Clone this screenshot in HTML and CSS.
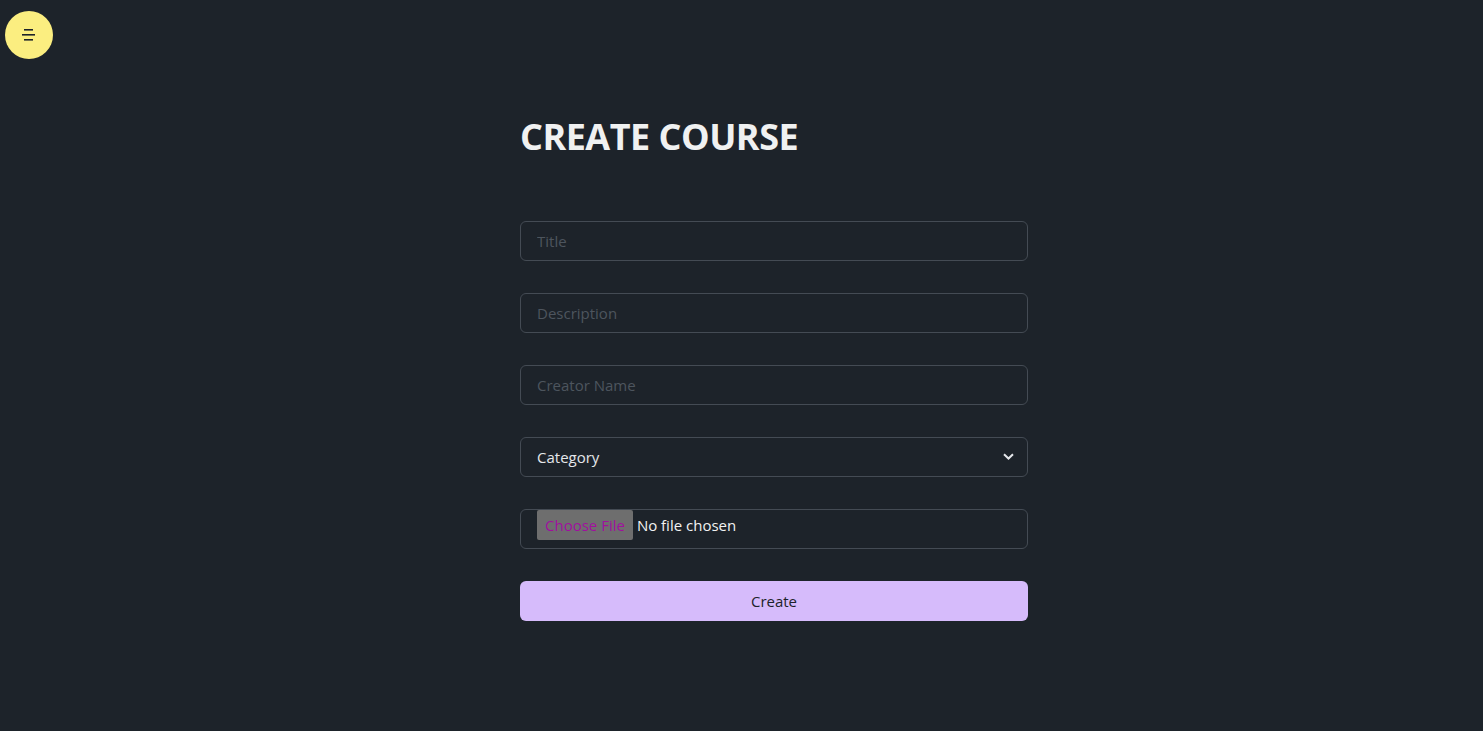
FILE: index.html
```html
<!DOCTYPE html>
<html lang="en">
<head>
<meta charset="utf-8">
<title>Create Course</title>
<link rel="stylesheet" href="styles.css">
</head>
<body>
<button class="menu-btn" type="button" aria-label="Menu">
  <svg width="14" height="12" viewBox="0 0 14 12" aria-hidden="true">
    <rect x="2" y="0" width="9" height="1.6" fill="#1d232a"/>
    <rect x="0" y="5" width="13" height="1.6" fill="#1d232a"/>
    <rect x="2" y="10" width="9" height="1.6" fill="#1d232a"/>
  </svg>
</button>
<main class="page">
  <h1 class="title">CREATE COURSE</h1>
  <form class="form">
    <input class="field" type="text" placeholder="Title">
    <input class="field" type="text" placeholder="Description">
    <input class="field" type="text" placeholder="Creator Name">
    <div class="select-wrap">
      <select class="field select">
        <option>Category</option>
      </select>
      <svg class="chev" width="11" height="7" viewBox="0 0 11 7" aria-hidden="true">
        <path d="M1 1.2 L5.5 5.5 L10 1.2" fill="none" stroke="#e5e7eb" stroke-width="2"/>
      </svg>
    </div>
    <div class="field file">
      <span class="file-btn">Choose File</span>
      <span class="file-name">No file chosen</span>
    </div>
    <button class="create" type="button">Create</button>
  </form>
</main>
</body>
</html>
```
FILE: styles.css
```css
html, body {
  margin: 0;
  padding: 0;
  background: #1d232a;
}
body {
  font-family: "Open Sans", "Noto Sans", sans-serif;
  color: #e5e7eb;
  min-height: 731px;
  padding-left: 65px;
  box-sizing: border-box;
}
.menu-btn {
  position: absolute;
  left: 5px;
  top: 11px;
  width: 48px;
  height: 48px;
  border-radius: 50%;
  border: none;
  background: #fbee80;
  padding: 0;
  display: flex;
  align-items: center;
  justify-content: center;
}
.page {
  width: 508px;
  margin: 0 auto;
  padding-top: 112px;
}
.title {
  margin: 0 0 59px;
  font-size: 36px;
  font-weight: 700;
  color: #f0f1f1;
  line-height: 50px;
  letter-spacing: -0.5px;
}
.form {
  display: flex;
  flex-direction: column;
  gap: 32px;
}
.field {
  box-sizing: border-box;
  width: 100%;
  height: 40px;
  background: #1d232a;
  border: 1px solid #444b54;
  border-radius: 6px;
  padding: 0 16px;
  font-family: inherit;
  font-size: 15px;
  color: #e5e7eb;
  outline: none;
  margin: 0;
}
.field::placeholder {
  color: #4d555e;
}
.select-wrap {
  position: relative;
}
.select {
  appearance: none;
  -webkit-appearance: none;
  color: #e5e7eb;
}
.chev {
  position: absolute;
  right: 14px;
  top: 16px;
  pointer-events: none;
}
.file {
  display: flex;
  align-items: flex-start;
  gap: 4px;
}
.file-btn {
  background: #6e6e6e;
  color: #a0109e;
  height: 30px;
  line-height: 30px;
  padding: 0 8px;
  border-radius: 2px;
  font-size: 15px;
}
.file-name {
  color: #f2f2f2;
  font-size: 15px;
  line-height: 30px;
}
.create {
  height: 40px;
  border: none;
  border-radius: 6px;
  background: #d6bbfb;
  color: #1d232a;
  font-family: inherit;
  font-size: 15px;
  font-weight: 500;
}
```
